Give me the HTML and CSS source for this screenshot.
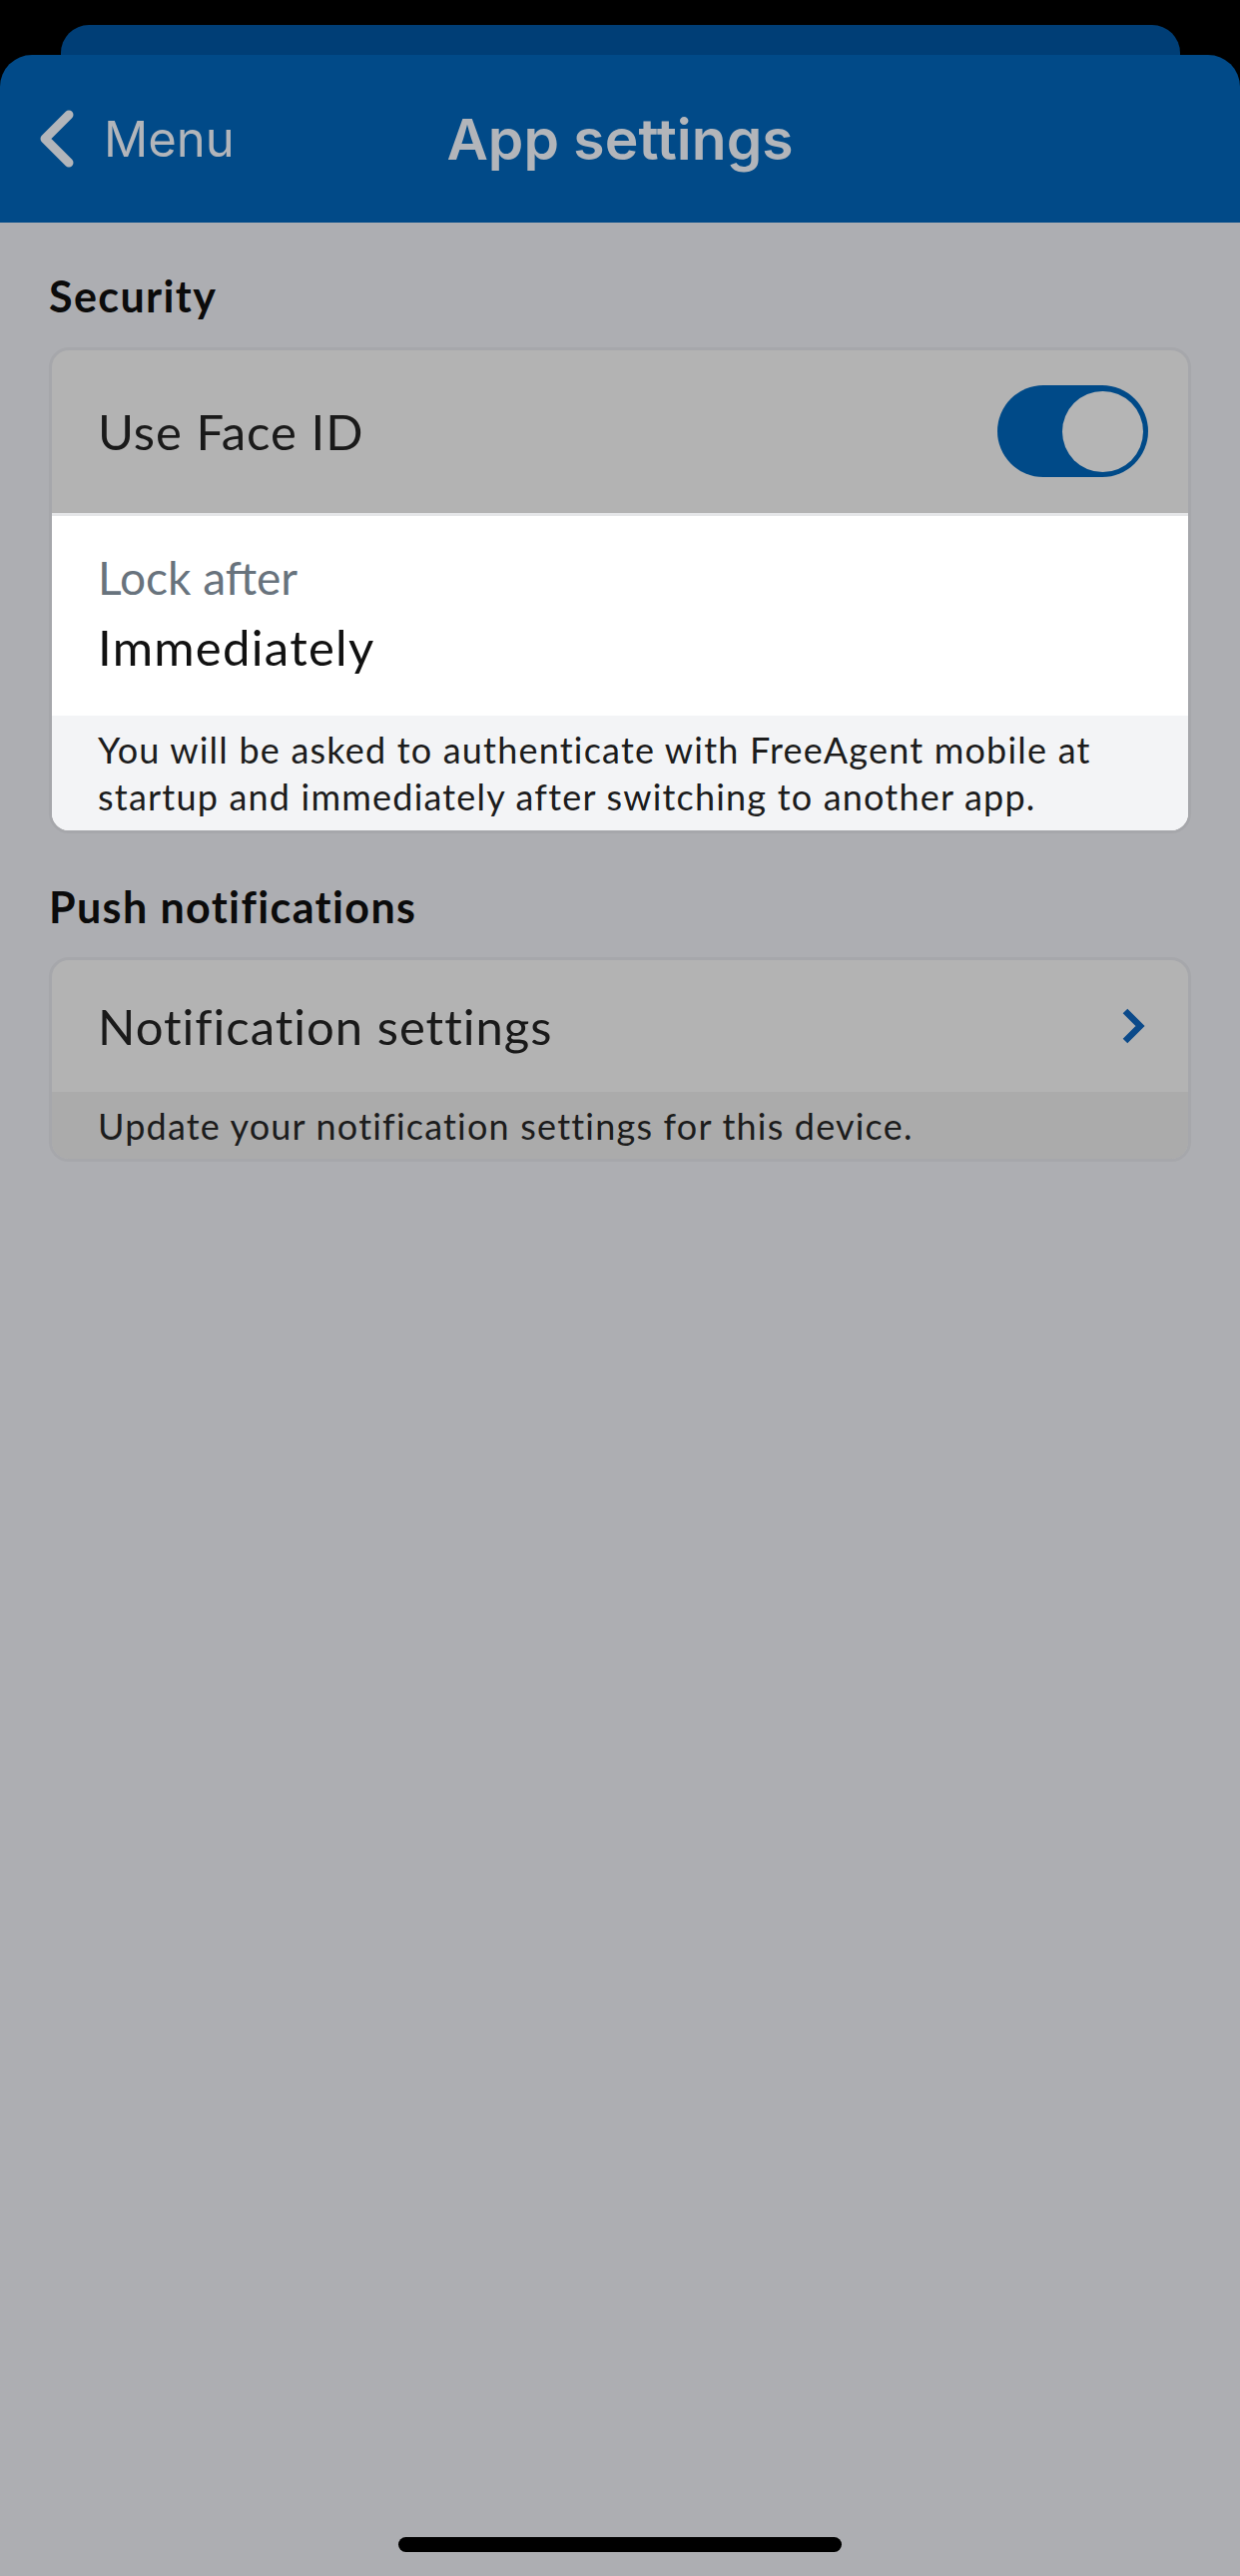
FILE: index.html
```html
<!DOCTYPE html>
<html lang="en">
<head>
    <meta charset="UTF-8">
    <meta name="viewport" content="width=device-width, initial-scale=1.0">
    <title>App settings</title>
    <link rel="stylesheet" href="styles.css">
</head>
<body>
    <div class="screen">
        <div class="sheet-back"></div>

        <header class="nav-bar">
            <a class="nav-back" href="#">
                <svg class="nav-back-icon" width="36" height="60" viewBox="0 0 36 60">
                    <path d="M31 6 L7 30 L31 54" fill="none" stroke="currentColor" stroke-width="9" stroke-linecap="round" stroke-linejoin="round"/>
                </svg>
                <span>Menu</span>
            </a>
            <h1 class="nav-title">App settings</h1>
            <div></div>
        </header>

        <main class="content">
            <h2 class="section-title">Security</h2>
            <div class="card">
                <div class="row row-toggle">
                    <span class="row-label">Use Face ID</span>
                    <span class="switch on"><span class="switch-knob"></span></span>
                </div>
                <div class="highlight">
                    <div class="lock-row">
                        <div class="lock-label">Lock after</div>
                        <div class="lock-value">Immediately</div>
                    </div>
                    <p class="footnote footnote-light">You will be asked to authenticate with FreeAgent mobile at startup and immediately after switching to another app.</p>
                </div>
            </div>

            <h2 class="section-title">Push notifications</h2>
            <div class="card">
                <div class="row row-link">
                    <span class="row-label">Notification settings</span>
                    <svg class="row-chevron" width="24" height="38" viewBox="0 0 24 38">
                        <path d="M4 4 L19 19 L4 34" fill="none" stroke="currentColor" stroke-width="6.5" stroke-linejoin="miter"/>
                    </svg>
                </div>
                <p class="footnote">Update your notification settings for this device.</p>
            </div>
        </main>

        <div class="home-indicator"></div>
    </div>
</body>
</html>
```

FILE: styles.css
```css
body {
    margin: 0;
    background-color: #000;
    font-family: Lato, "Noto Sans", sans-serif;
}

.screen {
    display: flex;
    flex-direction: column;
    min-height: 2581px;
}

/* the card behind the current one, peeking out on top */
.sheet-back {
    height: 30px;
    margin: 25px 60px 0 61px;
    background-color: #003e76;
    border-radius: 28px 28px 0 0;
}

.nav-bar {
    display: grid;
    grid-template-columns: 1fr auto 1fr;
    align-items: center;
    height: 168px;
    background-color: #014a88;
    border-radius: 32px 32px 0 0;
    color: #b2b5ba;
    font-family: Inter, "Liberation Sans", sans-serif;
}

.nav-back {
    display: flex;
    align-items: center;
    gap: 30px;
    padding-left: 38px;
    color: inherit;
    text-decoration: none;
    font-size: 49px;
}

.nav-back-icon {
    display: block;
}

.nav-title {
    margin: 0;
    font-size: 57px;
    font-weight: 600;
}

.content {
    flex: 1;
    padding: 0 49px;
    background-color: #adaeb2;
}

.section-title {
    margin: 48px 0 25px;
    font-size: 43px;
    font-weight: 700;
    line-height: 1.2;
    letter-spacing: 1.4px;
    color: #0b0b0b;
}

.card {
    background-color: #b3b3b3;
    border: 3px solid #a6a7ab;
    border-radius: 20px;
    overflow: hidden;
}

.row {
    display: flex;
    align-items: center;
    justify-content: space-between;
    padding: 0 43px 0 46px;
}

.row-toggle {
    height: 163px;
    padding-right: 40px;
}

.row-link {
    height: 132px;
}

.row-label {
    font-size: 49px;
    letter-spacing: 1px;
    color: #1a1a1a;
}

.row-chevron {
    display: block;
    color: #0b4a8a;
}

.switch {
    display: flex;
    align-items: center;
    justify-content: flex-end;
    box-sizing: border-box;
    width: 151px;
    height: 92px;
    padding: 0 5px;
    background-color: #004a88;
    border-radius: 46px;
}

.switch-knob {
    width: 81px;
    height: 81px;
    background-color: #b5b5b5;
    border-radius: 50%;
}

.highlight {
    background-color: #fff;
    border-top: 3px solid #e5e6e8;
}

.lock-row {
    height: 200px;
    box-sizing: border-box;
    padding: 34px 46px 0;
}

.lock-label {
    font-size: 46px;
    line-height: 1.2;
    color: #68737d;
}

.lock-value {
    margin-top: 13px;
    font-size: 49px;
    line-height: 1.2;
    letter-spacing: 1.3px;
    color: #111;
}

.footnote {
    margin: 0;
    padding: 11px 46px 9px;
    font-size: 36px;
    line-height: 47px;
    letter-spacing: 1.2px;
    color: #1c1c1c;
    background-color: #ababab;
}

.footnote-light {
    padding-bottom: 10px;
    background-color: #f3f4f6;
}

.home-indicator {
    align-self: center;
    width: 444px;
    height: 15px;
    margin: -39px 0 24px;
    background-color: #000;
    border-radius: 8px;
    position: relative;
}
```
